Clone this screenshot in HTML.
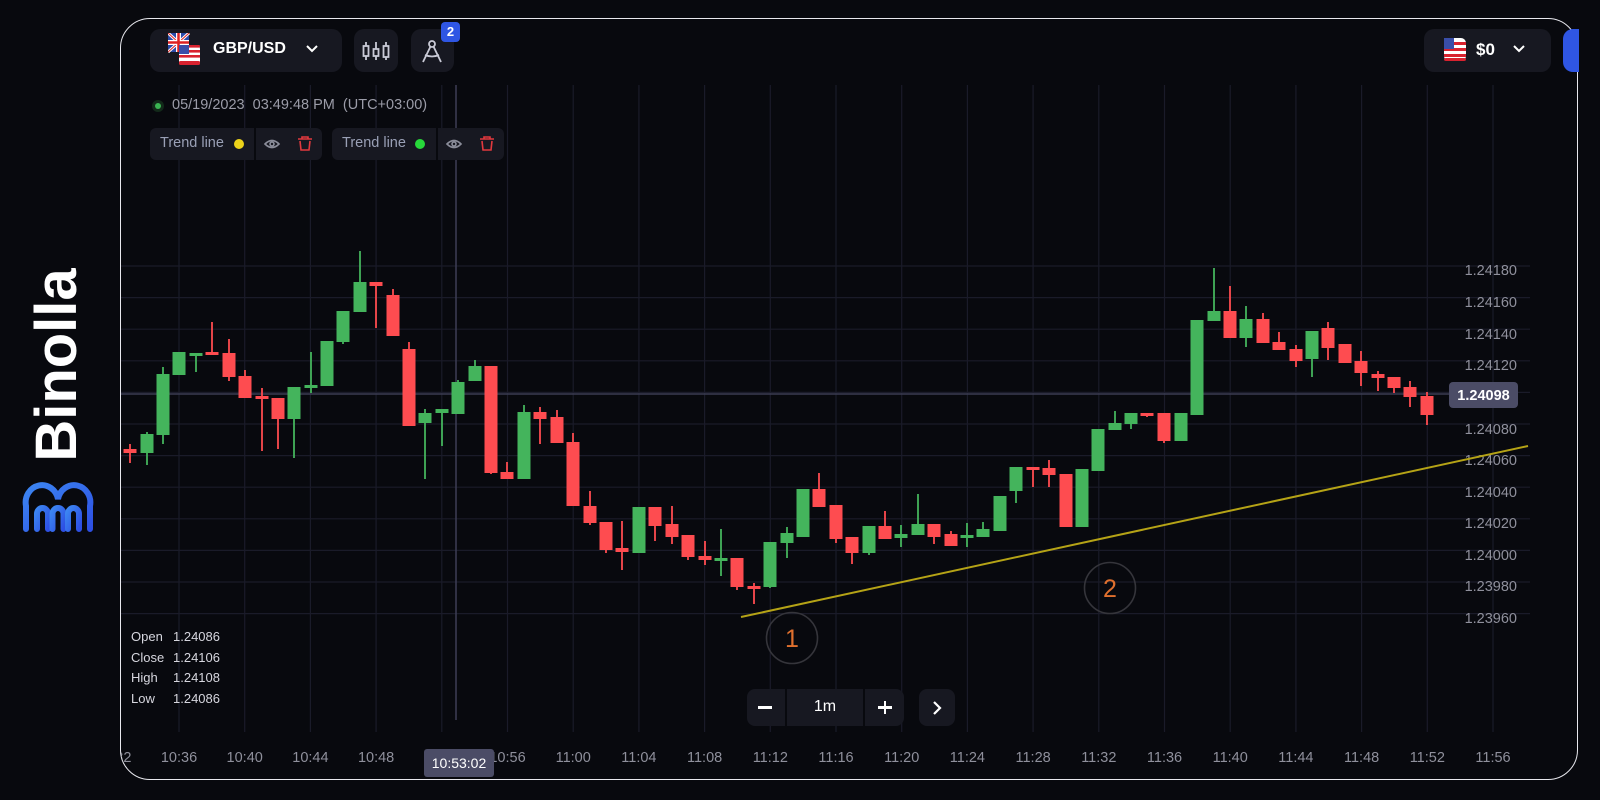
<!DOCTYPE html>
<html><head><meta charset="utf-8"><style>
*{margin:0;padding:0;box-sizing:border-box}
html,body{width:1600px;height:800px;background:#08090e;overflow:hidden;font-family:"Liberation Sans",Arial,sans-serif}
.frame{position:absolute;left:120px;top:18px;width:1458px;height:762px;border:1.5px solid #e8e8ee;border-radius:30px;overflow:hidden;background:#08090e}
.abs{position:absolute}
.btn{position:absolute;background:#171821;border-radius:10px}
.lbl{position:absolute;color:#8e8f9c;font-size:14px}
</style></head><body>
<div class="abs" style="left:0;top:0;width:120px;height:800px">
  <div class="abs" style="left:57px;top:365px;transform:translate(-50%,-50%) rotate(-90deg);color:#fff;font-weight:bold;font-size:58px;white-space:nowrap;line-height:1">Binolla</div>
  <svg class="abs" style="left:0;top:0" width="120" height="800">
    <defs><linearGradient id="lg" x1="0" y1="0" x2="1" y2="1"><stop offset="0" stop-color="#3c86f2"/><stop offset="1" stop-color="#2d4fe3"/></linearGradient></defs>
    <g fill="none" stroke="url(#lg)" stroke-width="6" stroke-linecap="round">
      <path d="M26 529 V506 A16 17 0 0 1 58 499 A16 17 0 0 1 90 506 V529"/>
      <path d="M37 529 V514 A5.5 6 0 0 1 48 514 V529"/>
      <path d="M52.5 529 V514 A5.5 6 0 0 1 63.5 514 V529"/>
      <path d="M68 529 V514 A5.5 6 0 0 1 79 514 V529"/>
    </g>
  </svg>
</div>
<div class="frame"></div>
<svg id="ch" class="abs" style="left:0;top:0" width="1600" height="800"></svg>

<!-- header -->
<div class="btn" style="left:150px;top:29px;width:192px;height:43px"></div>
<svg class="abs" style="left:168px;top:33px" width="36" height="34">
  <rect x="0" y="0" width="21" height="19" rx="4" fill="#2a4aa8"/>
  <path d="M0 0 L21 19 M21 0 L0 19" stroke="#fff" stroke-width="3"/>
  <path d="M0 0 L21 19 M21 0 L0 19" stroke="#d22" stroke-width="1"/>
  <path d="M10.5 0 V19 M0 9.5 H21" stroke="#fff" stroke-width="5"/>
  <path d="M10.5 0 V19 M0 9.5 H21" stroke="#d22" stroke-width="2.5"/>
  <rect x="11" y="12" width="21" height="20" rx="4" fill="#fff"/>
  <g fill="#d8222f"><rect x="11" y="12" width="21" height="2.6" rx="1"/><rect x="11" y="17" width="21" height="2.6"/><rect x="11" y="22" width="21" height="2.6"/><rect x="11" y="28" width="21" height="4" rx="1.5"/></g>
  <rect x="11" y="12" width="10" height="9" fill="#3a4ea8"/>
</svg>
<div class="abs" style="left:213px;top:40px;color:#fff;font-weight:bold;font-size:16px">GBP/USD</div>
<svg class="abs" style="left:305px;top:44px" width="14" height="10"><path d="M2 2 L7 7 L12 2" fill="none" stroke="#fff" stroke-width="2"/></svg>
<div class="btn" style="left:354px;top:29px;width:44px;height:43px"></div>
<svg class="abs" style="left:354px;top:29px" width="44" height="43" fill="none" stroke="#c9cad6" stroke-width="1.8">
  <path d="M12 13 V31 M22 13 V31 M32 13 V31"/><rect x="9.5" y="17" width="5" height="10" fill="#171821"/><rect x="19.5" y="20" width="5" height="7" fill="#171821"/><rect x="29.5" y="17" width="5" height="11" fill="#171821"/>
</svg>
<div class="btn" style="left:411px;top:29px;width:43px;height:43px"></div>
<svg class="abs" style="left:411px;top:29px" width="43" height="43" fill="none" stroke="#c9cad6" stroke-width="1.8">
  <circle cx="21" cy="15" r="3"/><path d="M19.5 17.5 L12 33 M22.5 17.5 L30 33 M14 26 Q21 29 28 26"/>
</svg>
<div class="abs" style="left:441px;top:22px;width:19px;height:20px;background:#2f56e4;border-radius:4px;color:#fff;font-weight:bold;font-size:13px;text-align:center;line-height:20px">2</div>

<div class="btn" style="left:1424px;top:29px;width:127px;height:43px"></div>
<svg class="abs" style="left:1444px;top:38px" width="22" height="23">
  <rect width="22" height="23" rx="5" fill="#fff"/>
  <g fill="#d8222f"><rect y="4" width="22" height="3"/><rect y="10" width="22" height="3"/><rect y="16" width="22" height="3"/><rect y="20" width="22" height="3" rx="2"/></g>
  <rect width="10" height="11" fill="#3a4ea8"/>
</svg>
<div class="abs" style="left:1476px;top:40px;color:#fff;font-weight:bold;font-size:17px">$0</div>
<svg class="abs" style="left:1512px;top:44px" width="14" height="10"><path d="M2 2 L7 7 L12 2" fill="none" stroke="#fff" stroke-width="2"/></svg>
<div class="abs" style="left:1563px;top:29px;width:16px;height:43px;background:#2f56e4;border-radius:10px 0 0 10px"></div>

<!-- date -->
<div class="abs" style="left:152px;top:100px;width:12px;height:12px;border-radius:50%;background:#132a1a"></div>
<div class="abs" style="left:155px;top:103px;width:6px;height:6px;border-radius:50%;background:#3ab552"></div>
<div class="abs" style="left:172px;top:97px;color:#9b9ca8;font-size:14.5px;white-space:nowrap">05/19/2023&nbsp; 03:49:48 PM&nbsp; (UTC+03:00)</div>

<!-- trend chips -->
<div class="btn" style="left:150px;top:128px;width:104px;height:32px;border-radius:6px 0 0 6px"></div>
<div class="btn" style="left:256px;top:128px;width:66px;height:32px;border-radius:0 6px 6px 0"></div>
<div class="abs" style="left:160px;top:135px;color:#9aa0b6;font-size:14.5px">Trend line</div>
<div class="abs" style="left:234px;top:139px;width:10px;height:10px;border-radius:50%;background:#ecd21a"></div>
<div class="btn" style="left:332px;top:128px;width:104px;height:32px;border-radius:6px 0 0 6px"></div>
<div class="btn" style="left:438px;top:128px;width:66px;height:32px;border-radius:0 6px 6px 0"></div>
<div class="abs" style="left:342px;top:135px;color:#9aa0b6;font-size:14.5px">Trend line</div>
<div class="abs" style="left:415px;top:139px;width:10px;height:10px;border-radius:50%;background:#27d83a"></div>
<svg class="abs" style="left:0;top:0" width="520" height="170" fill="none" stroke-width="1.6">
  <g stroke="#8b8d9a"><path d="M265 144 Q272 137 279 144 Q272 151 265 144Z"/><circle cx="272" cy="144" r="2"/>
  <path d="M447 144 Q454 137 461 144 Q454 151 447 144Z"/><circle cx="454" cy="144" r="2"/></g>
  <g stroke="#e2393e"><path d="M298 139 H312 M302 139 V137 H308 V139 M300 141 L301 150 H309 L310 141"/>
  <path d="M480 139 H494 M484 139 V137 H490 V139 M482 141 L483 150 H491 L492 141"/></g>
</svg>

<!-- OHLC -->
<div class="abs" style="left:131px;top:627px;color:#d6d6de;font-size:13px;line-height:20.7px">Open<br>Close<br>High<br>Low</div>
<div class="abs" style="left:173px;top:627px;color:#d6d6de;font-size:13px;line-height:20.7px">1.24086<br>1.24106<br>1.24108<br>1.24086</div>

<!-- bottom controls -->
<div class="btn" style="left:747px;top:689px;width:38px;height:37px;border-radius:8px 0 0 8px"></div>
<div class="btn" style="left:787px;top:689px;width:76px;height:37px;border-radius:0"></div>
<div class="btn" style="left:865px;top:689px;width:39px;height:37px;border-radius:0 8px 8px 0"></div>
<div class="btn" style="left:919px;top:689px;width:36px;height:37px;border-radius:8px"></div>
<div class="abs" style="left:758px;top:706px;width:14px;height:2.5px;background:#fff"></div>
<div class="abs" style="left:787px;top:698px;width:76px;text-align:center;color:#fff;font-size:16px">1m</div>
<div class="abs" style="left:878px;top:706px;width:14px;height:2.5px;background:#fff"></div>
<div class="abs" style="left:883.7px;top:701px;width:2.5px;height:13px;background:#fff"></div>
<svg class="abs" style="left:930px;top:699px" width="14" height="18"><path d="M4 3 L10 9 L4 15" fill="none" stroke="#fff" stroke-width="2.2"/></svg>

<script>
var s=document.getElementById('ch'),h='';
function L(x1,y1,x2,y2,c,w){h+='<line x1="'+x1+'" y1="'+y1+'" x2="'+x2+'" y2="'+y2+'" stroke="'+c+'" stroke-width="'+w+'"/>';}
for(var i=0;i<23;i++){var x=113.3+65.7*i;if(x>121&&x<1530)L(x,85,x,732,'#1a1b29',1.2);}
for(var i=0;i<12;i++){var y=266+31.6*i;L(121,y,1530,y,'#1a1b29',1.2);}
var ly=['1.24180',270,'1.24160',302,'1.24140',334,'1.24120',365,'1.24080',429,'1.24060',460,'1.24040',492,'1.24020',523,'1.24000',555,'1.23980',586,'1.23960',618];
for(var i=0;i<ly.length;i+=2)h+='<text x="1517" y="'+(ly[i+1]+5)+'" text-anchor="end" fill="#8f909c" font-size="14.5" font-family="Liberation Sans,Arial">'+ly[i]+'</text>';
L(456,85,456,720,'#3d3e55',1.5);
L(121,394,1450,394,'#3b3c52',1.6);
var C=[[130,0,449,453,444,463],[147,1,434,453,432,465],[163,1,374,435,367,444],[179,1,352,375,352,375],[196,1,353,355,353,372],[212,0,352,355,322,355],[229,0,353,377,339,381],[245,0,376,398,370,398],[262,0,396,399,388,451],[278,0,398,419,398,449],[294,1,387,419,387,458],[311,1,385,388,352,393],[327,1,341,386,341,386],[343,1,311,342,311,344],[360,1,282,312,251,312],[376,0,282,286,282,328],[393,0,295,336,289,336],[409,0,349,426,342,426],[425,1,413,423,409,479],[442,1,409,413,409,446],[458,1,382,414,380,414],[475,1,366,381,360,381],[491,0,366,473,366,474],[507,0,472,479,462,479],[524,1,412,479,405,479],[540,0,412,419,407,444],[557,0,417,443,410,443],[573,0,442,506,433,506],[590,0,506,523,491,525],[606,0,522,550,522,553],[622,0,548,552,521,570],[639,1,507,553,507,553],[655,0,507,526,507,541],[672,0,524,537,506,544],[688,0,535,557,535,560],[705,0,556,560,541,565],[721,1,558,560,529,576],[737,0,558,587,558,590],[754,0,586,589,583,604],[770,1,542,587,542,588],[787,1,533,543,527,558],[803,1,489,537,489,537],[819,0,489,507,473,507],[836,0,505,539,505,543],[852,0,537,553,537,564],[869,1,526,553,526,555],[885,0,526,539,511,539],[901,1,534,538,525,547],[918,1,524,535,494,535],[934,0,524,537,524,544],[951,0,534,546,531,546],[967,1,535,538,523,547],[983,1,529,537,522,537],[1000,1,496,531,496,531],[1016,1,467,491,467,503],[1033,0,467,469,467,487],[1049,0,468,475,460,487],[1066,0,474,527,474,527],[1082,1,469,527,469,527],[1098,1,429,471,429,471],[1115,1,423,430,411,430],[1131,1,413,424,413,429],[1147,0,413,415,413,417],[1164,0,413,441,413,443],[1181,1,413,441,413,441],[1197,1,320,415,320,415],[1214,1,311,321,268,321],[1230,0,311,338,286,338],[1246,1,319,338,306,347],[1263,0,319,343,313,343],[1279,0,342,350,332,350],[1296,0,349,361,345,367],[1312,1,331,359,331,377],[1328,0,328,348,322,360],[1345,0,344,363,344,363],[1361,0,361,373,351,386],[1378,0,374,378,371,391],[1394,0,377,388,377,393],[1410,0,387,397,381,407],[1427,0,396,415,392,425]];
for(var i=0;i<C.length;i++){var c=C[i],col=c[1]?'#44b45c':'#fe4c50';
L(c[0],c[4],c[0],c[5],col,1.8);
var hh=Math.max(c[3]-c[2],3);h+='<rect x="'+(c[0]-6.5)+'" y="'+c[2]+'" width="13" height="'+hh+'" fill="'+col+'"/>';}
L(741,617,1528,446,'#b5a316',2);
h+='<circle cx="792" cy="638" r="25.5" fill="none" stroke="#35353b" stroke-width="1.6"/><text x="792" y="647" text-anchor="middle" fill="#e0702e" font-size="25" font-family="Liberation Sans,Arial">1</text>';
h+='<circle cx="1110" cy="588" r="25.5" fill="none" stroke="#35353b" stroke-width="1.6"/><text x="1110" y="597" text-anchor="middle" fill="#e0702e" font-size="25" font-family="Liberation Sans,Arial">2</text>';
h+='<rect x="1449" y="382" width="69" height="26" rx="4" fill="#4b4c66"/><text x="1483.5" y="400" text-anchor="middle" fill="#fff" font-size="14.5" font-weight="bold" font-family="Liberation Sans,Arial">1.24098</text>';
var t=['10:32','10:36','10:40','10:44','10:48','10:52','10:56','11:00','11:04','11:08','11:12','11:16','11:20','11:24','11:28','11:32','11:36','11:40','11:44','11:48','11:52','11:56'];
for(var i=0;i<t.length;i++){var x=113.3+65.7*i;h+='<text x="'+x+'" y="762" text-anchor="middle" fill="#8f909c" font-size="14.5" font-family="Liberation Sans,Arial">'+t[i]+'</text>';}
h+='<rect x="424" y="749" width="70" height="28" rx="3" fill="#4b4c66"/><text x="459" y="768" text-anchor="middle" fill="#fff" font-size="14" font-family="Liberation Sans,Arial">10:53:02</text>';
s.innerHTML='<defs><clipPath id="cp"><rect x="121" y="19" width="1456" height="760" rx="29"/></clipPath></defs><g clip-path="url(#cp)">'+h+'</g>';
</script>
</body></html>
